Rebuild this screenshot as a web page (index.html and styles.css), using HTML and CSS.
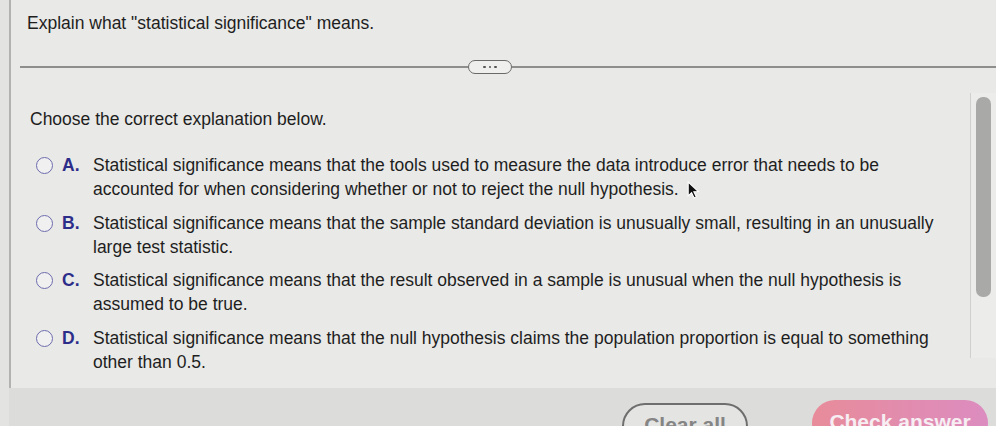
FILE: index.html
```html
<!DOCTYPE html>
<html>
<head>
<meta charset="utf-8">
<link rel="stylesheet" href="styles.css">
</head>
<body>
<div class="page">
  <div class="panel">
    <div class="title">Explain what "statistical significance" means.</div>
    <div class="divider">
      <div class="line line-left"></div>
      <div class="more"><span></span><span></span><span></span></div>
      <div class="line line-right"></div>
    </div>
    <div class="body">
      <div class="content">
        <div class="prompt">Choose the correct explanation below.</div>
        <div class="options">
          <div class="option">
            <div class="radio"></div>
            <div class="letter">A.</div>
            <div class="text">Statistical significance means that the tools used to measure the data introduce error that needs to be accounted for when considering whether or not to reject the null hypothesis.<svg class="cursor" width="13" height="18" viewBox="0 0 12 17"><path d="M1 1 L1 14 L4.2 11 L6.6 16 L8.6 15 L6.3 10.2 L10.6 10 Z" fill="#111" stroke="#fff" stroke-width="1"/></svg></div>
          </div>
          <div class="option">
            <div class="radio"></div>
            <div class="letter">B.</div>
            <div class="text">Statistical significance means that the sample standard deviation is unusually small, resulting in an unusually large test statistic.</div>
          </div>
          <div class="option">
            <div class="radio"></div>
            <div class="letter">C.</div>
            <div class="text">Statistical significance means that the result observed in a sample is unusual when the null hypothesis is assumed to be true.</div>
          </div>
          <div class="option">
            <div class="radio"></div>
            <div class="letter">D.</div>
            <div class="text">Statistical significance means that the null hypothesis claims the population proportion is equal to something other than 0.5.</div>
          </div>
        </div>
      </div>
      <div class="scroll">
        <div class="thumb"></div>
      </div>
    </div>
  </div>
  <div class="footer">
    <div class="btn btn-clear">Clear all</div>
    <div class="btn btn-check">Check answer</div>
  </div>
</div>
</body>
</html>
```
FILE: styles.css
```css
* { box-sizing: border-box; }
html, body {
  margin: 0;
  padding: 0;
  width: 996px;
  height: 426px;
  overflow: hidden;
  background: #e3e3e1;
  font-family: "Liberation Sans", Arial, sans-serif;
  color: #1e1e1e;
}
.page {
  width: 996px;
  height: 426px;
  display: flex;
  flex-direction: column;
  padding-left: 9px;
}
.panel {
  flex: none;
  height: 388px;
  border-left: 2px solid #b2b2b0;
  background: #e9e9e7;
  display: flex;
  flex-direction: column;
}
.title {
  font-size: 17.5px;
  line-height: 22px;
  padding: 12px 0 0 16px;
}
.divider {
  margin-top: 26px;
  margin-left: 9px;
  height: 14px;
  display: flex;
  align-items: center;
}
.line {
  height: 2px;
  background: #8e8e8c;
}
.line-left { width: 448px; }
.line-right { flex: 1; }
.more {
  width: 44px;
  height: 14px;
  border: 1.5px solid #6a6a6a;
  border-radius: 7px;
  background: #efefed;
  display: flex;
  align-items: center;
  justify-content: center;
  gap: 3px;
}
.more span {
  width: 2.5px;
  height: 2.5px;
  border-radius: 50%;
  background: #555;
}
.body {
  flex: 1;
  display: flex;
}
.content {
  flex: 1;
  padding-left: 19px;
}
.prompt {
  font-size: 17.5px;
  line-height: 22px;
  margin-top: 34px;
}
.options {
  margin-top: 23px;
  display: flex;
  flex-direction: column;
  gap: 9.5px;
}
.option {
  display: flex;
  align-items: flex-start;
  font-size: 17.5px;
  line-height: 24px;
}
.radio {
  width: 17px;
  height: 17px;
  border: 1.6px solid #6c6cae;
  border-radius: 50%;
  margin: 4px 0 0 6px;
  background: #f0f0f0;
  flex: none;
}
.letter {
  width: 40px;
  padding-left: 9px;
  font-weight: bold;
  color: #2d2d8a;
  flex: none;
}
.text {
  width: 850px;
}
.cursor {
  vertical-align: -4px;
  margin-left: 8px;
}
.scroll {
  width: 26px;
  margin: 19px 0 30px 0;
  border-left: 1px solid #d0d0ce;
  padding: 4px 5px 0 5px;
  background: #ececea;
}
.thumb {
  width: 15px;
  height: 200px;
  border-radius: 7px;
  background: #a9a9a7;
}
.footer {
  flex: 1;
  background: #dcdcda;
  display: flex;
  align-items: flex-start;
  padding-top: 12px;
}
.btn {
  height: 46px;
  border-radius: 23px;
  font-size: 21px;
  font-weight: bold;
  display: flex;
  align-items: center;
  justify-content: center;
  padding-bottom: 2px;
}
.btn-clear {
  margin-left: 613px;
  margin-top: 3px;
  width: 126px;
  border: 2px solid #6e6e6e;
  color: #858585;
  background: #e4e4e2;
}
.btn-check {
  margin-left: 64px;
  width: 176px;
  color: #f6eef2;
  background: linear-gradient(90deg, #e88c9a, #dc8cc0);
}
```
